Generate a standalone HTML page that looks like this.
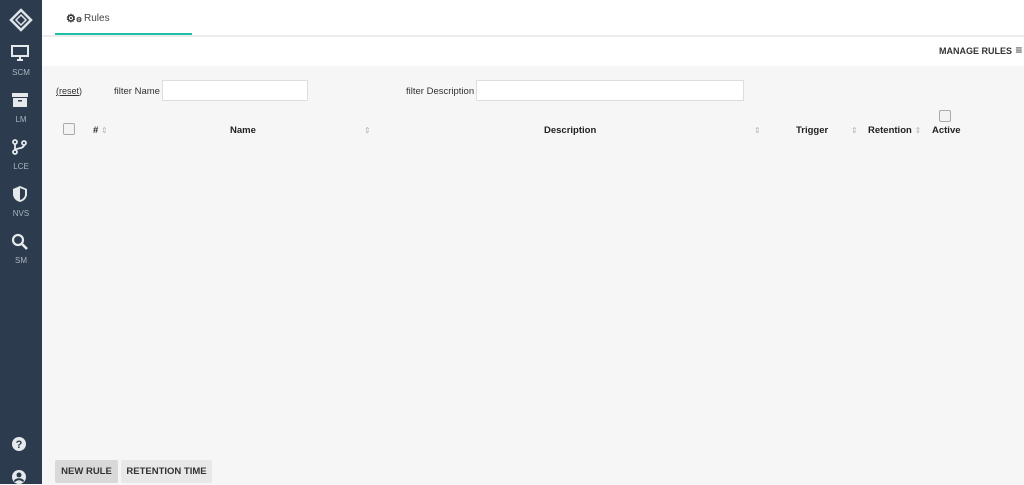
<!DOCTYPE html>
<html><head><style>
*{margin:0;padding:0;box-sizing:border-box}
body{width:1024px;height:484px;overflow:hidden;background:#f6f6f6;font-family:"Liberation Sans",sans-serif;font-size:10px;color:#333;position:relative}
.sb{position:absolute;left:0;top:0;width:42px;height:484px;background:#2c3c4e}
.sb .it{position:absolute;left:0;width:42px;text-align:center;color:#aab4bf;font-size:8px}
.ab{position:absolute}
.hdr{position:absolute;left:42px;top:0;right:0;height:66px;background:#fff}
input{position:absolute;height:21px;border:1px solid #ddd;background:#fff}
.th{position:absolute;top:125px;font-weight:bold;font-size:9.5px;color:#222}
.th.s,.s{color:#b5b5b5;font-weight:normal;font-size:8px}
.cb{position:absolute;width:12px;height:12px;border:1px solid #aaa;border-radius:2px;background:#f3f3f3}
.btn{position:absolute;top:460px;height:23px;font-weight:bold;font-size:9.5px;color:#333;text-align:center;line-height:23px;border-radius:2px}
</style></head><body>
<div class="sb">
 <svg class="ab" style="left:9px;top:8px" width="24" height="24" viewBox="0 0 24 24"><path d="M12 2L22 12 12 22 2 12Z" fill="none" stroke="#dfe4e8" stroke-width="2.5"/><path d="M12 7L17 12 12 17 7 12Z" fill="none" stroke="#dfe4e8" stroke-width="1.5"/></svg>
 <svg class="ab" style="left:11px;top:45px" width="18" height="16" viewBox="0 0 18 16"><rect x="1" y="1" width="16" height="10" fill="none" stroke="#e5e9ec" stroke-width="2"/><path d="M6 15h6M9 11v4" stroke="#e5e9ec" stroke-width="2"/></svg>
 <div class="it" style="top:68px">SCM</div>
 <svg class="ab" style="left:12px;top:93px" width="16" height="14" viewBox="0 0 16 14"><rect x="0" y="0" width="16" height="4" fill="#e5e9ec"/><rect x="1" y="5" width="14" height="9" fill="#e5e9ec"/><rect x="6" y="7" width="4" height="1.5" fill="#2c3c4e"/></svg>
 <div class="it" style="top:115px">LM</div>
 <svg class="ab" style="left:12px;top:139px" width="16" height="16" viewBox="0 0 16 16"><g fill="none" stroke="#e5e9ec" stroke-width="1.8"><circle cx="3" cy="3" r="2"/><circle cx="3" cy="13" r="2"/><circle cx="12" cy="4" r="2"/><path d="M3 5v6M12 6c0 4-8 3-9 5"/></g></svg>
 <div class="it" style="top:162px">LCE</div>
 <svg class="ab" style="left:12px;top:185px" width="16" height="18" viewBox="0 0 16 18"><path d="M8 1L15 4v5c0 4-3 7-7 8C4 16 1 13 1 9V4Z" fill="#e5e9ec"/><path d="M8 3v12c3-1 5-3 5-6V5Z" fill="#2c3c4e"/></svg>
 <div class="it" style="top:209px">NVS</div>
 <svg class="ab" style="left:11px;top:233px" width="17" height="17" viewBox="0 0 17 17"><circle cx="7" cy="7" r="5" fill="none" stroke="#e5e9ec" stroke-width="2.2"/><path d="M11 11l5 5" stroke="#e5e9ec" stroke-width="2.6"/></svg>
 <div class="it" style="top:256px">SM</div>
 <svg class="ab" style="left:11px;top:436px" width="16" height="16" viewBox="0 0 16 16"><circle cx="8" cy="8" r="7" fill="#e5e9ec"/><text x="8" y="12" text-anchor="middle" font-size="11" font-weight="bold" fill="#2c3c4e" font-family="Liberation Sans">?</text></svg>
 <svg class="ab" style="left:11px;top:469px" width="16" height="16" viewBox="0 0 16 16"><circle cx="8" cy="8" r="7" fill="#e5e9ec"/><circle cx="8" cy="6" r="2.5" fill="#2c3c4e"/><path d="M3.5 12.5c2-3 7-3 9 0" stroke="#2c3c4e" stroke-width="2" fill="none"/></svg>
</div>
<div class="hdr">
 <div class="ab" style="left:0;top:35px;width:982px;height:2px;background:#ececec"></div>
 <div class="ab" style="left:13px;top:33px;width:137px;height:2px;background:#1fbfa6"></div>
 <div class="ab" style="left:24px;top:12px;font-size:11px;font-weight:bold;color:#333">⚙<span style="font-size:7px">⚙</span></div>
 <div class="ab" style="left:42px;top:13px;font-size:10px;color:#444">Rules</div>
 <div class="ab" style="left:897px;top:46px;font-size:9px;font-weight:bold;color:#333">MANAGE RULES<span style="font-size:12px;line-height:9px"> ≡</span></div>
</div>
<div class="ab" style="left:56px;top:86px;font-size:9px;color:#333"><span style="text-decoration:underline">(reset</span>)</div>
<div class="ab" style="left:114px;top:86px;font-size:9.5px">filter Name</div>
<input style="left:162px;top:80px;width:146px">
<div class="ab" style="left:406px;top:86px;font-size:9.5px">filter Description</div>
<input style="left:476px;top:80px;width:268px">
<div class="cb" style="left:63px;top:123px"></div>
<div class="th" style="left:93px">#  <span class="s">⇕</span></div>
<div class="th" style="left:230px">Name</div><div class="th s" style="left:364px;top:126px">⇕</div>
<div class="th" style="left:544px">Description</div><div class="th s" style="left:754px;top:126px">⇕</div>
<div class="th" style="left:796px">Trigger</div><div class="th s" style="left:851px;top:126px">⇕</div>
<div class="th" style="left:868px">Retention <span class="s">⇕</span></div>
<div class="cb" style="left:939px;top:110px"></div>
<div class="th" style="left:932px">Active</div>
<div class="btn" style="left:55px;width:63px;background:#d9d9d9">NEW RULE</div>
<div class="btn" style="left:121px;width:91px;background:#e8e8e8">RETENTION TIME</div>
</body></html>
